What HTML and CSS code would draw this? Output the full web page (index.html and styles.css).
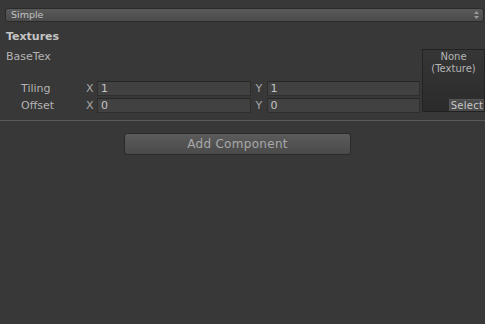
FILE: index.html
```html
<!DOCTYPE html>
<html lang="en">
<head>
    <meta charset="UTF-8">
    <title>Material Inspector</title>
    <link rel="stylesheet" href="styles.css">
</head>
<body>

<div class="shader-select">
    <span>Simple</span>
    <svg class="arrows" width="5" height="8" viewBox="0 0 5 8">
        <polygon points="2.5,0 5,3 0,3" fill="#9a9a9a"/>
        <polygon points="0,5 5,5 2.5,8" fill="#9a9a9a"/>
    </svg>
</div>

<div class="section-title">Textures</div>

<div class="prop">
    <div class="prop-main">
        <div class="prop-label">BaseTex</div>
        <div class="vec-row first">
            <span class="vec-label">Tiling</span>
            <span class="axis">X</span>
            <div class="field">1</div>
            <span class="axis second-axis">Y</span>
            <div class="field">1</div>
        </div>
        <div class="vec-row">
            <span class="vec-label">Offset</span>
            <span class="axis">X</span>
            <div class="field">0</div>
            <span class="axis second-axis">Y</span>
            <div class="field">0</div>
        </div>
    </div>
    <div class="tex-slot">
        <div class="tex-name">None<br>(Texture)</div>
        <div class="select-btn">Select</div>
    </div>
</div>

<div class="separator"></div>

<div class="add-row">
    <button class="add-btn">Add Component</button>
</div>

</body>
</html>
```

FILE: styles.css
```css
body {
    margin: 0;
    padding: 0;
    width: 485px;
    height: 324px;
    background-color: #383838;
    font-family: "DejaVu Sans", "Liberation Sans", sans-serif;
    font-size: 11px;
    color: #b4b4b4;
    overflow: hidden;
}
.shader-select {
    display: flex;
    align-items: center;
    justify-content: space-between;
    box-sizing: border-box;
    height: 14px;
    margin: 8px 1px 0 5px;
    padding: 0 4px 0 5px;
    border: 1px solid #2a2a2a;
    border-radius: 3px;
    background: linear-gradient(#5a5a5a, #4b4b4b);
    color: #c2c2c2;
    font-size: 9.5px;
    line-height: 12px;
}
.arrows {
    display: block;
}
.section-title {
    margin-top: 8px;
    padding-left: 6px;
    line-height: 14px;
    font-weight: bold;
    color: #c4c4c4;
}
.prop {
    display: flex;
    margin-top: 5px;
    padding-left: 6px;
}
.prop-main {
    flex: 1;
    margin-right: 2px;
}
.prop-label {
    margin-top: 1px;
    line-height: 14px;
}
.vec-row {
    display: flex;
    align-items: center;
    height: 15px;
    margin-top: 2px;
    padding-left: 15px;
}
.vec-row.first {
    margin-top: 17px;
}
.vec-label {
    width: 65px;
}
.axis {
    width: 11px;
    color: #a8a8a8;
}
.second-axis {
    margin-left: 5px;
}
.field {
    flex: 1;
    box-sizing: border-box;
    height: 15px;
    padding-left: 3px;
    border: 1px solid #2e2e2e;
    border-top-color: #262626;
    background-color: #414141;
    color: #c4c4c4;
    line-height: 14px;
}
.tex-slot {
    position: relative;
    box-sizing: border-box;
    width: 63px;
    height: 63px;
    border: 1px solid #222222;
    background: linear-gradient(#363636, #2b2b2b);
}
.tex-name {
    margin-top: 1px;
    text-align: center;
    font-size: 10px;
    line-height: 12px;
    color: #b4b4b4;
}
.select-btn {
    position: absolute;
    right: 0;
    bottom: 0;
    width: 34px;
    height: 11px;
    background-color: #4a4a4a;
    border-top: 1px solid #555555;
    border-left: 1px solid #555555;
    color: #c8c8c8;
    font-size: 10px;
    line-height: 11px;
    text-align: center;
    letter-spacing: 0.3px;
}
.separator {
    height: 1px;
    margin-top: 7px;
    background-color: #595959;
}
.add-row {
    display: flex;
    justify-content: center;
    padding-right: 10px;
    margin-top: 12px;
}
.add-btn {
    width: 227px;
    height: 22px;
    padding: 0;
    border: 1px solid #2a2a2a;
    border-radius: 3px;
    background: linear-gradient(#5b5b5b, #4a4a4a);
    color: #a8a8a8;
    font-family: "DejaVu Sans", "Liberation Sans", sans-serif;
    font-size: 12px;
    line-height: 20px;
    letter-spacing: 0.3px;
}
```
